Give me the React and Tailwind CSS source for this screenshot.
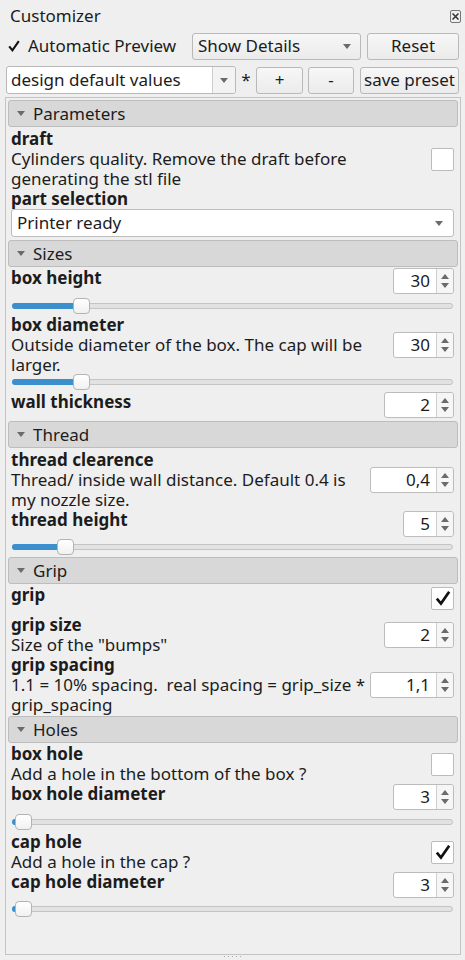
import React from "react";

const font = { fontFamily: '"Noto Sans", "Open Sans", sans-serif' };

const Arrow = ({ className = "" }) => (
  <svg width="8" height="5" viewBox="0 0 8 5" className={className}>
    <path d="M0 0 L8 0 L4 5 Z" fill="#6b6b6b" />
  </svg>
);

const Check = ({ size = 16 }) => (
  <svg width={size} height={size} viewBox="0 0 16 16">
    <path d="M2.5 8.5 L6.2 13 L13.5 2.5" fill="none" stroke="#111" strokeWidth="2.4" strokeLinejoin="miter" />
  </svg>
);

const Button = ({ children, className = "justify-center" }) => (
  <div
    className={
      "h-[27px] flex items-center rounded-[3px] border border-[#b9b9b9] bg-gradient-to-b from-[#f7f7f7] to-[#ebebeb] " +
      className
    }
  >
    {children}
  </div>
);

const Header = ({ title, className = "mt-[3px]" }) => (
  <div
    className={
      "h-[27px] flex items-center rounded-[3px] border border-[#bdbdbd] bg-[#d8d8d8] " + className
    }
  >
    <Arrow className="ml-[8px] mr-[8px]" />
    <span>{title}</span>
  </div>
);

const CheckBox = ({ checked }) => (
  <div className="w-[23px] h-[23px] rounded-[2px] border border-[#bcbcbc] bg-white flex items-center justify-center shrink-0">
    {checked && <Check size={18} />}
  </div>
);

const Spin = ({ value, w }) => (
  <div
    className="h-[26px] flex rounded-[3px] border border-[#bcbcbc] bg-white shrink-0"
    style={{ width: w }}
  >
    <div className="flex-1 flex items-center justify-end pr-[6px]">{value}</div>
    <div className="w-[17px] border-l border-[#cfcfcf] bg-[#f6f6f6] rounded-r-[3px] flex flex-col items-center justify-center gap-[4px]">
      <svg width="8" height="5" viewBox="0 0 8 5">
        <path d="M0 5 L8 5 L4 0 Z" fill="#6b6b6b" />
      </svg>
      <Arrow />
    </div>
  </div>
);

const Slider = ({ pos, className = "" }) => (
  <div className={"relative h-[16px] mx-[1px] " + className}>
    <div className="absolute left-0 right-0 top-[5px] h-[6px] rounded-full border border-[#c4c4c4] bg-[#e2e2e2]" />
    <div
      className="absolute left-0 top-[5px] h-[6px] rounded-l-full bg-[#3b8fcd]"
      style={{ width: pos + 4 }}
    />
    <div
      className="absolute top-0 h-[16px] w-[17px] rounded-[4px] border border-[#b3b3b3] bg-gradient-to-b from-white to-[#f1f1f1]"
      style={{ left: pos }}
    />
  </div>
);

const Item = ({ label, desc = [], control, h, className = "" }) => (
  <div className={"flex items-center justify-between " + className} style={{ minHeight: h }}>
    <div className="self-start leading-[20px]">
      <div className="font-bold">{label}</div>
      {desc.map((d, i) => (
        <div key={i} className="whitespace-pre">{d}</div>
      ))}
    </div>
    {control}
  </div>
);

export default function App() {
  return (
    <div className="w-[465px] h-[960px] bg-[#efefef] text-[#1c1c1c] text-[17px] overflow-hidden" style={font}>
      {/* title bar */}
      <div className="h-[32px] flex items-center justify-between pl-[10px] pr-[4px]">
        <span>Customizer</span>
        <div className="w-[11px] h-[13px] border border-[#777] rounded-[2px] flex items-center justify-center">
          <svg width="7" height="7" viewBox="0 0 7 7">
            <path d="M0.5 0.5 L6.5 6.5 M6.5 0.5 L0.5 6.5" stroke="#333" strokeWidth="1.5" />
          </svg>
        </div>
      </div>

      {/* row 1 */}
      <div className="h-[28px] flex items-center pl-[6px]">
        <div className="w-[186px] flex items-center">
          <div className="w-[15px] h-[15px] flex items-center justify-center">
            <Check size={14} />
          </div>
          <span className="ml-[7px]">Automatic Preview</span>
        </div>
        <Button className="w-[169px] justify-between pl-[5px] pr-[9px]">
          <span>Show Details</span>
          <Arrow />
        </Button>
        <Button className="w-[92px] ml-[6px] justify-center">Reset</Button>
      </div>

      {/* row 2 */}
      <div className="h-[28px] mt-[6px] flex items-center pl-[6px]">
        <div className="w-[230px] h-[28px] flex rounded-[3px] border border-[#b9b9b9] bg-white">
          <div className="flex-1 flex items-center pl-[4px]">design default values</div>
          <div className="w-[23px] border-l border-[#cfcfcf] bg-[#f3f3f3] rounded-r-[3px] flex items-center justify-center">
            <Arrow />
          </div>
        </div>
        <div className="w-[20px] flex justify-center self-start pt-[1px]">*</div>
        <Button className="w-[47px] justify-center">+</Button>
        <Button className="w-[46px] ml-[5px] justify-center">-</Button>
        <Button className="w-[99px] ml-[6px] justify-center">save preset</Button>
      </div>

      {/* parameter panel */}
      <div className="mt-[3px] ml-[5px] w-[456px] h-[858px] border border-[#c4c4c4] p-[2px]">
        <Header title="Parameters" className="" />
        <div className="pl-[3px] pr-[4px] pt-[2px]">
          <Item
            label="draft"
            desc={["Cylinders quality. Remove the draft before", "generating the stl file"]}
            control={<CheckBox />}
          />
          <div className="font-bold leading-[20px]">part selection</div>
          <div className="h-[28px] flex items-center justify-between rounded-[3px] border border-[#bcbcbc] bg-white pl-[5px] pr-[10px]">
            <span>Printer ready</span>
            <Arrow />
          </div>
        </div>

        <Header title="Sizes" />
        <div className="pl-[3px] pr-[4px] pt-[1px]">
          <Item label="box height" h={26} control={<Spin value="30" w={61} />} />
          <Slider pos={61} className="mt-[4px]" />
          <Item
            label="box diameter"
            desc={["Outside diameter of the box. The cap will be", "larger."]}
            control={<Spin value="30" w={61} />}
            h={26}
            className="mt-[1px]"
          />
          <Slider pos={61} className="-mt-[1px]" />
          <Item label="wall thickness" h={26} className="mt-[2px]" control={<Spin value="2" w={70} />} />
        </div>

        <Header title="Thread" />
        <div className="pl-[3px] pr-[4px] pt-[2px]">
          <Item
            label="thread clearence"
            desc={["Thread/ inside wall distance. Default 0.4 is", "my nozzle size."]}
            control={<Spin value="0,4" w={84} />}
          />
          <Item label="thread height" h={27} control={<Spin value="5" w={51} />} />
          <Slider pos={45} className="mt-[2px]" />
        </div>

        <Header title="Grip" className="mt-[2px]" />
        <div className="pl-[3px] pr-[4px] pt-[1px]">
          <Item label="grip" h={26} control={<CheckBox checked />} />
          <Item
            label="grip size"
            desc={['Size of the "bumps"']}
            className="mt-[4px]"
            control={<Spin value="2" w={70} />}
          />
          <Item
            label="grip spacing"
            desc={["1.1 = 10% spacing.  real spacing = grip_size *", "grip_spacing"]}
            control={<Spin value="1,1" w={84} />}
          />
        </div>

        <Header title="Holes" className="mt-[1px]" />
        <div className="pl-[3px] pr-[4px] pt-[1px]">
          <Item
            label="box hole"
            desc={["Add a hole in the bottom of the box ?"]}
            control={<CheckBox />}
          />
          <Item label="box hole diameter" h={26} control={<Spin value="3" w={61} />} />
          <Slider pos={3} className="mt-[4px]" />
          <Item
            label="cap hole"
            desc={["Add a hole in the cap ?"]}
            className="mt-[2px]"
            control={<CheckBox checked />}
          />
          <Item label="cap hole diameter" h={26} control={<Spin value="3" w={61} />} />
          <Slider pos={3} className="mt-[3px]" />
        </div>
      </div>
      <div className="flex justify-center mt-[1px]">
        <svg width="20" height="2" viewBox="0 0 20 2">
          {[0, 4, 8, 12, 16].map((x) => (
            <rect key={x} x={x + 1} y="0" width="1" height="1" fill="#aaa" />
          ))}
        </svg>
      </div>
    </div>
  );
}
